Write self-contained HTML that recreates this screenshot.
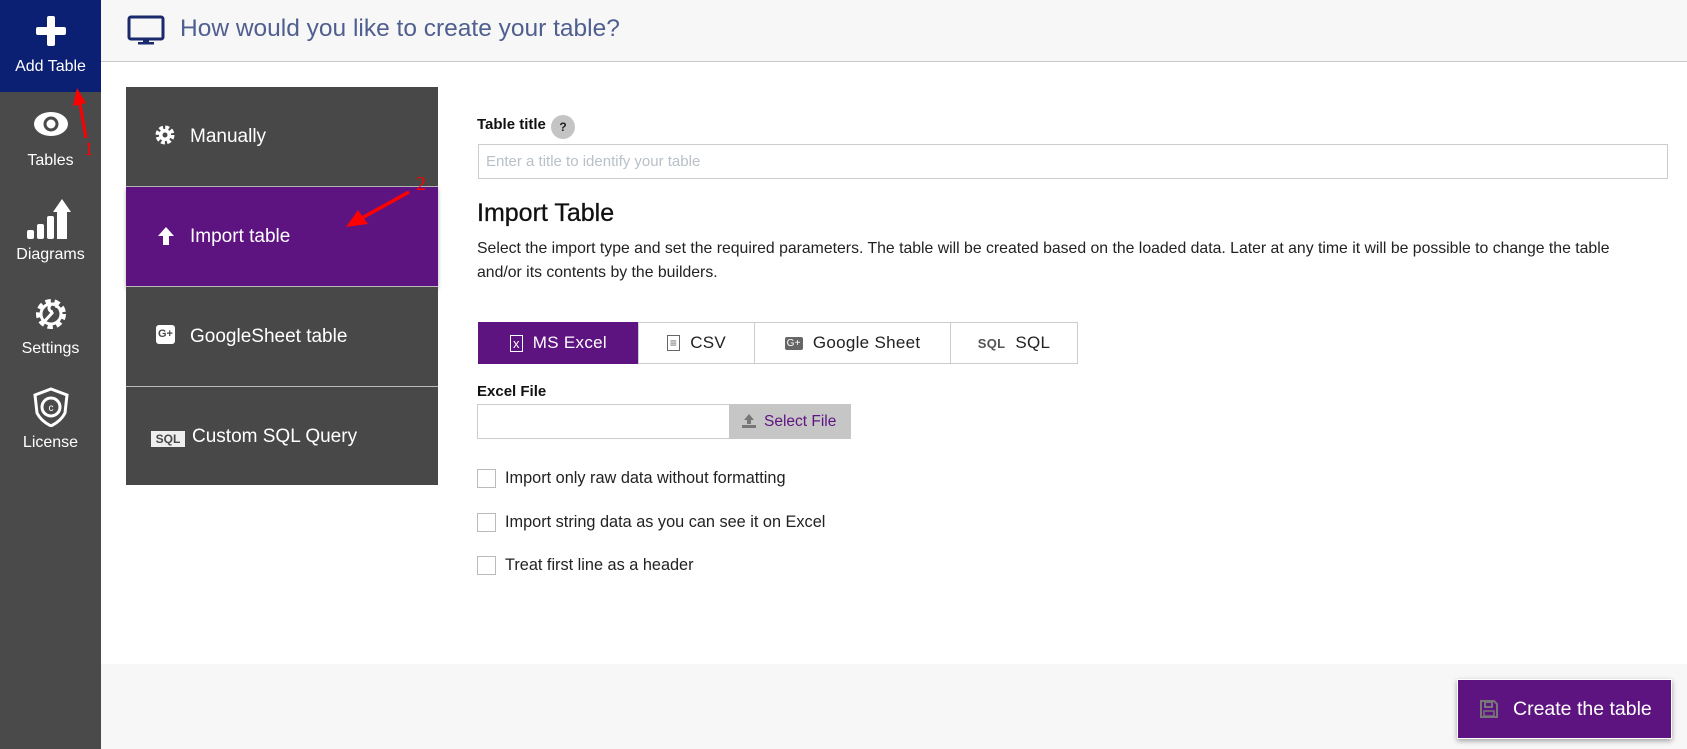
<!DOCTYPE html>
<html><head><meta charset="utf-8"><style>
*{box-sizing:border-box;margin:0;padding:0}
body{width:1687px;height:749px;overflow:hidden;background:#fff;font-family:"Liberation Sans",sans-serif;position:relative}
.abs{position:absolute}
#side{left:0;top:0;width:101px;height:749px;background:#4a4a4a}
#add{left:0;top:0;width:101px;height:92px;background:#0b1f73}
.sl{position:absolute;width:101px;text-align:center;color:#fff;font-size:16px}
#hdr{left:101px;top:0;width:1586px;height:62px;background:#f7f7f7;border-bottom:1px solid #c8c8c8}
#foot{left:101px;top:664px;width:1586px;height:85px;background:#f7f7f7}
.row{position:absolute;left:126px;width:312px;height:100px;background:#484848;color:#fff;font-size:19px;border-bottom:1px solid #bbb}
.row span{position:absolute;left:64px;top:39px}
.tab{position:absolute;top:322px;height:42px;border:1px solid #ccc;font-size:17px;color:#222;display:flex;align-items:center;justify-content:center;gap:10px;letter-spacing:.3px}
.cb{position:absolute;left:477px;width:19px;height:19px;border:1px solid #bbb;background:#fff}
.cl{position:absolute;left:505px;font-size:16.3px;color:#222}
</style></head><body>
<div id="side" class="abs"></div>
<div id="add" class="abs"></div>
<svg class="abs" style="left:36px;top:16px" width="30" height="30"><rect x="11" y="0" width="8" height="30" rx="2" fill="#fff"/><rect x="0" y="11" width="30" height="8" rx="2" fill="#fff"/></svg>
<div class="sl" style="top:58px">Add Table</div>
<svg class="abs" style="left:33px;top:110px" width="36" height="28"><ellipse cx="18" cy="14" rx="17" ry="12" fill="#fff"/><circle cx="18" cy="14" r="7.5" fill="#4a4a4a"/><circle cx="18" cy="14" r="4.5" fill="#fff"/></svg>
<div class="sl" style="top:152px">Tables</div>
<svg class="abs" style="left:26px;top:198px" width="46" height="42"><rect x="1" y="32" width="7" height="9" rx="2" fill="#fff"/><rect x="11" y="26" width="7" height="15" rx="2" fill="#fff"/><rect x="21" y="18" width="7" height="23" rx="2" fill="#fff"/><polygon points="31,41 31,14 27,14 36,1 45,14 41,14 41,41" fill="#fff"/></svg>
<div class="sl" style="top:246px">Diagrams</div>
<svg class="abs" style="left:34px;top:297px" width="34" height="34"><circle cx="17" cy="17" r="12" fill="none" stroke="#fff" stroke-width="6" stroke-dasharray="5 3.5"/><circle cx="17" cy="17" r="10" fill="none" stroke="#fff" stroke-width="3"/><path d="M9 26 L19 15 M19 15 a4 4 0 1 1 4 -4" stroke="#fff" stroke-width="3" fill="none"/></svg>
<div class="sl" style="top:340px">Settings</div>
<svg class="abs" style="left:33px;top:387px" width="36" height="40"><path d="M18 2 L34 8 L32 26 Q28 34 18 39 Q8 34 4 26 L2 8 Z" fill="none" stroke="#fff" stroke-width="3"/><circle cx="18" cy="20" r="9" fill="none" stroke="#fff" stroke-width="3"/><text x="18" y="24" font-size="10" fill="#fff" text-anchor="middle" font-family="Liberation Sans">c</text></svg>
<div class="sl" style="top:434px">License</div>

<div id="hdr" class="abs"></div>
<svg class="abs" style="left:127px;top:15px" width="38" height="30"><rect x="2" y="2" width="34" height="22" rx="2" fill="none" stroke="#1a2a6c" stroke-width="3"/><rect x="16" y="24" width="6" height="3" fill="#1a2a6c"/><rect x="11" y="27" width="16" height="2.5" fill="#1a2a6c"/></svg>
<div class="abs" style="left:180px;top:15px;font-size:24.5px;color:#4f5f8f">How would you like to create your table?</div>
<div id="foot" class="abs"></div>

<div class="row" style="top:87px"><svg class="abs" style="left:29px;top:38px" width="20" height="20"><circle cx="10" cy="10" r="7" fill="none" stroke="#fff" stroke-width="5" stroke-dasharray="3.5 2"/><circle cx="10" cy="10" r="6" fill="#fff"/><circle cx="10" cy="10" r="2.5" fill="#484848"/></svg><span>Manually</span></div>
<div class="row" style="top:187px;background:#5e1480;box-shadow:0 2px 4px rgba(0,0,0,.3)"><svg class="abs" style="left:30px;top:38px" width="20" height="22"><path d="M10 2 L2 11 H7 V20 H13 V11 H18 Z" fill="#fff"/></svg><span>Import table</span></div>
<div class="row" style="top:287px"><div class="abs" style="left:30px;top:38px;width:19px;height:19px;background:#fff;border-radius:3px;color:#484848;font-size:11px;font-weight:bold;text-align:center;line-height:19px">G+</div><span>GoogleSheet table</span></div>
<div class="row" style="top:387px;height:98px;border:none"><div class="abs" style="left:25px;top:44px;width:34px;height:16px;background:#eee;color:#484848;font-size:12px;font-weight:bold;text-align:center;line-height:16px">SQL</div><span style="left:66px">Custom SQL Query</span></div>

<div class="abs" style="left:477px;top:116px;font-size:15px;font-weight:bold;color:#111">Table title</div>
<div class="abs" style="left:551px;top:115px;width:24px;height:24px;border-radius:50%;background:#c4c4c4;font-size:12px;font-weight:bold;text-align:center;line-height:24px;color:#222">?</div>
<div class="abs" style="left:478px;top:144px;width:1190px;height:35px;border:1px solid #ccc"></div>
<div class="abs" style="left:486px;top:153px;font-size:15px;color:#b8c0c8">Enter a title to identify your table</div>
<div class="abs" style="left:477px;top:199px;font-size:25px;color:#111;-webkit-text-stroke:.3px #111">Import Table</div>
<div class="abs" style="left:477px;top:237px;width:1180px;font-size:15.8px;line-height:24px;color:#222">Select the import type and set the required parameters. The table will be created based on the loaded data. Later at any time it will be possible to change the table and/or its contents by the builders.</div>

<div class="tab" style="left:478px;width:161px;background:#5e1480;border-color:#5e1480;color:#fff"><span style="font-size:13px;border:1.5px solid #fff;padding:0 2px">x</span>MS Excel</div>
<div class="tab" style="left:638px;width:117px"><span style="font-size:12px;border:1.5px solid #666;padding:0 2px;color:#666">≡</span>CSV</div>
<div class="tab" style="left:754px;width:197px"><span style="font-size:10px;background:#666;color:#fff;padding:1px 2px;border-radius:2px">G+</span>Google Sheet</div>
<div class="tab" style="left:950px;width:128px"><span style="font-size:13px;font-weight:bold;color:#555">SQL</span>SQL</div>

<div class="abs" style="left:477px;top:383px;font-size:15px;font-weight:bold;color:#111">Excel File</div>
<div class="abs" style="left:477px;top:404px;width:374px;height:35px;border:1px solid #ccc"></div>
<div class="abs" style="left:729px;top:404px;width:122px;height:35px;background:#c6c6c6;color:#5e1480;font-size:15.5px;line-height:35px;padding-left:35px">Select File</div>
<svg class="abs" style="left:741px;top:413px" width="16" height="16"><path d="M8 1 L3 7 H6 V11 H10 V7 H13 Z M1 12 H15 V15 H1 Z" fill="#777"/></svg>

<div class="cb" style="top:469px"></div><div class="cl" style="top:469px">Import only raw data without formatting</div>
<div class="cb" style="top:513px"></div><div class="cl" style="top:513px">Import string data as you can see it on Excel</div>
<div class="cb" style="top:556px"></div><div class="cl" style="top:556px">Treat first line as a header</div>

<div class="abs" style="left:1457px;top:679px;width:215px;height:60px;background:#5e1480;border:1px solid #fff;box-shadow:0 2px 5px rgba(0,0,0,.35)"></div>
<svg class="abs" style="left:1480px;top:700px" width="18" height="18"><path d="M1 1 H14 L17 4 V17 H1 Z" fill="none" stroke="#777" stroke-width="2"/><rect x="5" y="2" width="7" height="5" fill="none" stroke="#777" stroke-width="2"/><rect x="4" y="11" width="10" height="5" fill="none" stroke="#777" stroke-width="1.5"/></svg>
<div class="abs" style="left:1513px;top:698px;font-size:19.5px;color:#fff">Create the table</div>

<svg class="abs" style="left:0;top:0" width="500" height="250"><path d="M86 138 L80 104" stroke="#f00" stroke-width="3"/><polygon points="77,88 73,106 86,103" fill="#f00"/><text x="84" y="155" fill="#f00" font-size="19" font-family="Liberation Serif">1</text><path d="M409 192 L362 218" stroke="#f00" stroke-width="3.5"/><polygon points="346,227 358,210 368,224" fill="#f00"/><text x="416" y="190" fill="#f00" font-size="20" font-family="Liberation Serif">2</text></svg>
</body></html>
